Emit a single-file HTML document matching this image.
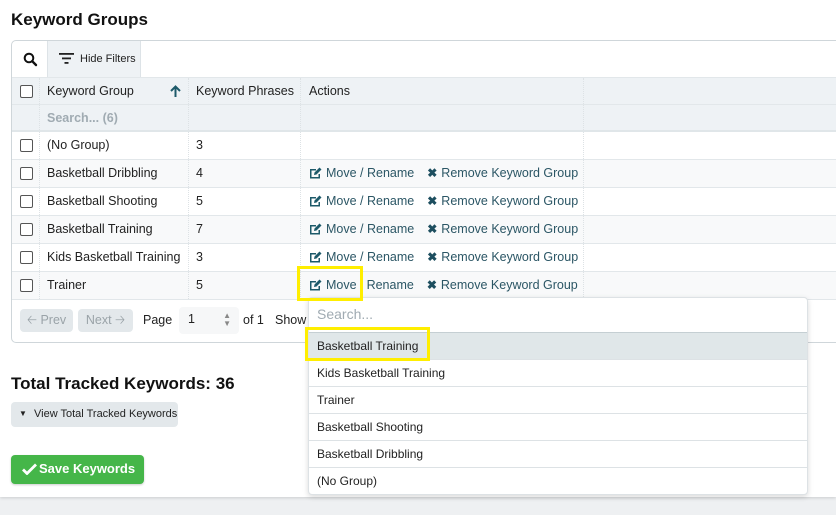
<!DOCTYPE html>
<html><head><style>
*{box-sizing:border-box;margin:0;padding:0}
body{width:836px;height:515px;background:#eef0f2;font-family:"Liberation Sans",Arial,sans-serif;color:#222;position:relative;overflow:hidden;font-size:12.5px}
.main{position:absolute;left:0;top:0;width:836px;height:497px;background:#fff;box-shadow:0 1px 3px rgba(0,0,0,.15)}
h1{position:absolute;left:11px;top:10px;font-size:17px;font-weight:bold;color:#111}
.card{position:absolute;left:11px;top:40px;width:830px;height:303px;border:1px solid #cfd6da;border-radius:5px;overflow:hidden;background:#fff}
.tb{position:absolute;left:0;top:0;height:36px;width:100%}
.hf{position:absolute;left:35px;top:0;width:94px;height:36px;background:#eef2f5;border-left:1px solid #dde3e7;border-right:1px solid #dde3e7;font-size:11px;line-height:36px;padding-left:32px;color:#222}
.row{position:absolute;left:0;width:100%;height:28px;border-bottom:1px solid #e2e7ea;line-height:26px}
.c{position:absolute;top:0;height:100%;border-right:1px dotted #dde2e5}
.cb{position:absolute;left:8px;top:7px;width:13px;height:13px;border:1.5px solid #555;border-radius:2px;background:#fff}
.a{color:#2b5665;font-size:12.5px}
.ed{display:inline-block;vertical-align:-2px;margin-right:4px}
.x{font-weight:bold;margin-right:4px;color:#1d4e5f;font-size:12px}
.g{display:inline-block;width:13px}
.btn{position:absolute;background:#e3e8eb;border-radius:4px;color:#9aa3a8;font-size:12.5px;text-align:center}
.dd{position:absolute;left:308px;top:297px;width:500px;height:198px;background:#fff;border:1px solid #dde2e5;border-radius:4px;box-shadow:0 2px 6px rgba(0,0,0,.15)}
.it{position:absolute;left:0;width:100%;height:27px;border-top:1px solid #dde2e5;padding-left:8px;line-height:26px;font-size:12px;color:#222}
.yb{position:absolute;border:3px solid #ffee00}
</style></head><body>
<div class="main">
<h1>Keyword Groups</h1>
<div class="card">
 <div class="tb">
  <svg style="position:absolute;left:11px;top:11px" width="15" height="15" viewBox="0 0 15 15"><circle cx="6" cy="6" r="4.3" fill="none" stroke="#111" stroke-width="2"/><line x1="9.2" y1="9.2" x2="13" y2="13" stroke="#111" stroke-width="2.4" stroke-linecap="round"/></svg>
  <div class="hf"><svg style="position:absolute;left:11px;top:12px" width="15" height="11" viewBox="0 0 15 11"><rect x="0" y="0" width="15" height="1.8" fill="#222"/><rect x="3" y="4.5" width="9" height="1.8" fill="#222"/><rect x="5.5" y="9" width="4" height="1.8" fill="#222"/></svg>Hide Filters</div>
 </div>
 <div class="row" style="top:36px;background:#eef2f5;border-top:1px solid #e2e7ea">
  <div class="c" style="left:0;width:28px"><div class="cb"></div></div>
  <div class="c" style="left:28px;width:149px;padding-left:7px;color:#222">Keyword Group<svg style="position:absolute;right:7px;top:7px" width="11" height="13" viewBox="0 0 11 13"><path d="M5.5 12V2M1 6l4.5-4.5L10 6" fill="none" stroke="#1d5a6a" stroke-width="2"/></svg></div>
  <div class="c" style="left:177px;width:112px;padding-left:7px">Keyword Phrases</div>
  <div class="c" style="left:289px;width:283px;padding-left:8px">Actions</div>
 </div>
 <div class="row" style="top:64px;background:#eef2f5;border-bottom:3px solid #e0e6e9">
  <div class="c" style="left:0;width:28px"></div>
  <div class="c" style="left:28px;width:149px;padding-left:7px;color:#a0abb2;font-weight:bold">Search... (6)</div>
  <div class="c" style="left:177px;width:112px"></div>
  <div class="c" style="left:289px;width:283px"></div>
 </div>
 <div class="row" style="top:91px;background:#fff"><div class="c" style="left:0;width:28px"><div class="cb"></div></div><div class="c" style="left:28px;width:149px;padding-left:7px">(No Group)</div><div class="c" style="left:177px;width:112px;padding-left:7px">3</div><div class="c" style="left:289px;width:283px"></div></div>
 <div class="row" style="top:119px;background:#f8f9fa"><div class="c" style="left:0;width:28px"><div class="cb"></div></div><div class="c" style="left:28px;width:149px;padding-left:7px">Basketball Dribbling</div><div class="c" style="left:177px;width:112px;padding-left:7px">4</div><div class="c a" style="left:289px;width:283px;padding-left:8px"><svg class="ed" width="13" height="12" viewBox="0 0 13 12"><path d="M1 2h6v1.5H2.5v6.5h7V7H11v4.5H1z" fill="#1d5a6a"/><path d="M5 8l.5-2.5L10.5.5l2 2-5 5z" fill="#1d5a6a"/></svg>Move / Rename<span class="g"></span><span class="x">&#10006;</span>Remove Keyword Group</div></div>
 <div class="row" style="top:147px;background:#fff"><div class="c" style="left:0;width:28px"><div class="cb"></div></div><div class="c" style="left:28px;width:149px;padding-left:7px">Basketball Shooting</div><div class="c" style="left:177px;width:112px;padding-left:7px">5</div><div class="c a" style="left:289px;width:283px;padding-left:8px"><svg class="ed" width="13" height="12" viewBox="0 0 13 12"><path d="M1 2h6v1.5H2.5v6.5h7V7H11v4.5H1z" fill="#1d5a6a"/><path d="M5 8l.5-2.5L10.5.5l2 2-5 5z" fill="#1d5a6a"/></svg>Move / Rename<span class="g"></span><span class="x">&#10006;</span>Remove Keyword Group</div></div>
 <div class="row" style="top:175px;background:#f8f9fa"><div class="c" style="left:0;width:28px"><div class="cb"></div></div><div class="c" style="left:28px;width:149px;padding-left:7px">Basketball Training</div><div class="c" style="left:177px;width:112px;padding-left:7px">7</div><div class="c a" style="left:289px;width:283px;padding-left:8px"><svg class="ed" width="13" height="12" viewBox="0 0 13 12"><path d="M1 2h6v1.5H2.5v6.5h7V7H11v4.5H1z" fill="#1d5a6a"/><path d="M5 8l.5-2.5L10.5.5l2 2-5 5z" fill="#1d5a6a"/></svg>Move / Rename<span class="g"></span><span class="x">&#10006;</span>Remove Keyword Group</div></div>
 <div class="row" style="top:203px;background:#fff"><div class="c" style="left:0;width:28px"><div class="cb"></div></div><div class="c" style="left:28px;width:149px;padding-left:7px">Kids Basketball Training</div><div class="c" style="left:177px;width:112px;padding-left:7px">3</div><div class="c a" style="left:289px;width:283px;padding-left:8px"><svg class="ed" width="13" height="12" viewBox="0 0 13 12"><path d="M1 2h6v1.5H2.5v6.5h7V7H11v4.5H1z" fill="#1d5a6a"/><path d="M5 8l.5-2.5L10.5.5l2 2-5 5z" fill="#1d5a6a"/></svg>Move / Rename<span class="g"></span><span class="x">&#10006;</span>Remove Keyword Group</div></div>
 <div class="row" style="top:231px;background:#f8f9fa"><div class="c" style="left:0;width:28px"><div class="cb"></div></div><div class="c" style="left:28px;width:149px;padding-left:7px">Trainer</div><div class="c" style="left:177px;width:112px;padding-left:7px">5</div><div class="c a" style="left:289px;width:283px;padding-left:8px"><svg class="ed" width="13" height="12" viewBox="0 0 13 12"><path d="M1 2h6v1.5H2.5v6.5h7V7H11v4.5H1z" fill="#1d5a6a"/><path d="M5 8l.5-2.5L10.5.5l2 2-5 5z" fill="#1d5a6a"/></svg>Move<span style="display:inline-block;width:10px"></span>Rename<span class="g"></span><span class="x">&#10006;</span>Remove Keyword Group</div></div>
 <div class="btn" style="left:8px;top:268px;width:53px;height:23px;line-height:23px">&#129120; Prev</div>
 <div class="btn" style="left:66px;top:268px;width:55px;height:23px;line-height:23px">Next &#129122;</div>
 <div style="position:absolute;left:131px;top:272px">Page</div>
 <div style="position:absolute;left:167px;top:266px;width:60px;height:27px;background:#f6f7f8;border-radius:4px;padding:5px 0 0 9px">1<span style="position:absolute;right:8px;top:5px;font-size:8px;color:#888;line-height:8px">&#9650;<br>&#9660;</span></div>
 <div style="position:absolute;left:231px;top:272px">of 1</div>
 <div style="position:absolute;left:263px;top:272px">Show</div>
</div>
<div style="position:absolute;left:11px;top:374px;font-size:17px;font-weight:bold;color:#111">Total Tracked Keywords: 36</div>
<div style="position:absolute;left:11px;top:402px;width:167px;height:25px;background:#e3e8eb;border-radius:4px;font-size:11px;line-height:24px;padding-left:23px">View Total Tracked Keywords<span style="position:absolute;left:8px;top:0;font-size:8px">&#9660;</span></div>
<div style="position:absolute;left:11px;top:455px;width:133px;height:29px;background:#45b649;border-radius:4px;color:#fff;font-weight:bold;font-size:13px;line-height:28px;padding-left:28px;box-shadow:0 1px 2px rgba(0,0,0,.2)"><svg style="position:absolute;left:11px;top:8px" width="15" height="12" viewBox="0 0 15 12"><path d="M1 6.5l4 4L14 1.5" fill="none" stroke="#fff" stroke-width="2.8"/></svg>Save Keywords</div>
</div>
<div class="dd">
 <div style="position:absolute;left:8px;top:8px;color:#a0abb2;font-size:14px">Search...</div>
 <div class="it" style="top:34px;background:#e0e7e9;border-top:1px solid #c5cfd3">Basketball Training</div>
 <div class="it" style="top:61px">Kids Basketball Training</div>
 <div class="it" style="top:88px">Trainer</div>
 <div class="it" style="top:115px">Basketball Shooting</div>
 <div class="it" style="top:142px">Basketball Dribbling</div>
 <div class="it" style="top:169px">(No Group)</div>
</div>
<div class="yb" style="left:297px;top:266px;width:66px;height:35px"></div>
<div class="yb" style="left:305px;top:327px;width:125px;height:34px"></div>
</body></html>
